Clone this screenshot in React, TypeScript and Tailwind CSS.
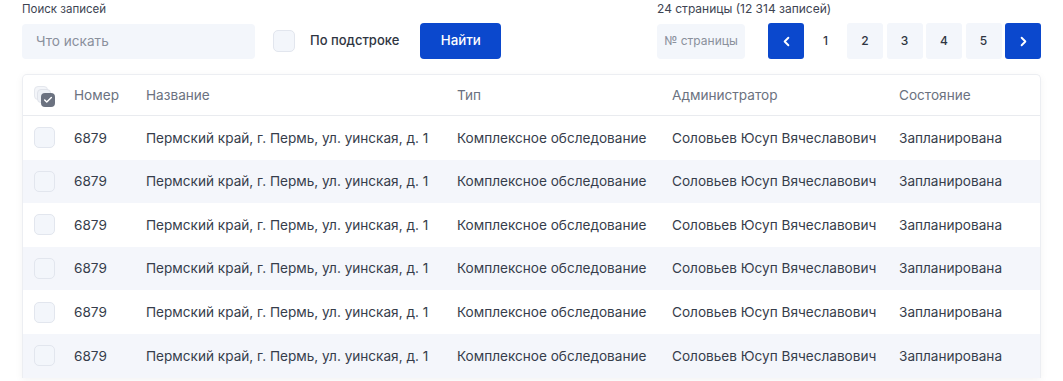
import { ChevronLeft, ChevronRight, Check } from 'lucide-react';

const rows = Array.from({ length: 6 }, () => ({
  id: '6879',
  name: 'Пермский край, г. Пермь, ул. уинская, д. 1',
  type: 'Комплексное обследование',
  admin: 'Соловьев Юсуп Вячеславович',
  status: 'Запланирована',
}));

const cols = 'grid grid-cols-[51px_72px_311px_215px_227px_1fr] items-center';

function Box() {
  return (
    <span className="block h-[21px] w-[21px] rounded-[5px] border border-[#e2e6ee] bg-[#f3f6fb]" />
  );
}

function StackBox() {
  // header "select all": stacked squares with a checked one in front
  return (
    <span className="relative block h-[21px] w-[22px]">
      <span className="absolute left-0 top-0 h-[14px] w-[14px] rounded-[4px] border border-[#e4e7ed] bg-[#f3f5f9]" />
      <span className="absolute left-[3px] top-[3px] h-[14px] w-[14px] rounded-[4px] border border-[#e0e3ea] bg-[#eef1f6]" />
      <span className="absolute left-[7px] top-[7px] flex h-[14px] w-[14px] items-center justify-center rounded-[4px] bg-[#6b7280]">
        <Check className="h-[10px] w-[10px] text-white" strokeWidth={3.5} />
      </span>
    </span>
  );
}

export default function App() {
  return (
    <div className="min-h-[381px] bg-white px-[22px] pt-[2px] font-['Inter','Noto_Sans',sans-serif] text-[#374151]">
      <div className="flex items-end justify-between">
        <div>
          <div className="mb-[7px] text-[11.5px] leading-[14px] text-[#3d4452]">Поиск записей</div>
          <div className="flex items-center">
            <div className="flex h-[35px] w-[233px] items-center rounded-[4px] bg-[#f3f6fb] px-[14px] text-[13.6px] text-[#8a909c]">
              Что искать
            </div>
            <span className="ml-[18px] block h-[22px] w-[22px] rounded-[5px] border border-[#e2e6ee] bg-[#f3f6fb]" />
            <span className="ml-[15px] text-[13px] font-medium text-[#2f3542]">По подстроке</span>
            <button className="ml-[21px] h-[36px] w-[81px] rounded-[4px] bg-[#0b48cd] text-[13.3px] font-medium text-white">
              Найти
            </button>
          </div>
        </div>
        <div>
          <div className="mb-[7px] text-[12px] leading-[14px] text-[#3d4452]">24 страницы (12 314 записей)</div>
          <div className="flex items-center">
            <div className="flex h-[35px] w-[88px] items-center justify-center rounded-[4px] bg-[#f3f6fb] text-[12px] text-[#8a909c]">
              № страницы
            </div>
            <div className="ml-[23px] flex items-center gap-[3.5px]">
              <button className="flex h-[36px] w-[36px] items-center justify-center rounded-[3px] bg-[#0b48cd] text-white">
                <ChevronLeft className="h-[15px] w-[15px]" strokeWidth={3} />
              </button>
              {['1', '2', '3', '4', '5'].map((p) => (
                <button
                  key={p}
                  className={
                    p === '1'
                      ? 'flex h-[36px] w-[36px] items-center justify-center rounded-[3px] text-[12px] font-medium text-[#2f3542]'
                      : 'flex h-[36px] w-[36px] items-center justify-center rounded-[3px] bg-[#f3f6fb] text-[12px] font-medium text-[#2f3542]'
                  }
                >
                  {p}
                </button>
              ))}
              <button className="flex h-[36px] w-[36px] items-center justify-center rounded-[3px] bg-[#0b48cd] text-white">
                <ChevronRight className="h-[15px] w-[15px]" strokeWidth={3} />
              </button>
            </div>
          </div>
        </div>
      </div>

      <div className="mt-[15px] overflow-hidden rounded-t-[5px] border-x border-t border-[#eceef2] shadow-[0_2px_8px_rgba(0,0,0,0.05)]">
        <div className={`${cols} h-[41px] border-b border-[#e9ebef] text-[13.6px] text-[#6b7280]`}>
          <div className="pl-[11px] pt-[2px]">
            <StackBox />
          </div>
          <div>Номер</div>
          <div>Название</div>
          <div>Тип</div>
          <div>Администратор</div>
          <div>Состояние</div>
        </div>
        {rows.map((r, i) => (
          <div
            key={i}
            className={`${cols} h-[43.6px] text-[13.6px] text-[#363d4b] ${i % 2 === 1 ? 'bg-[#f4f6fb]' : 'bg-white'}`}
          >
            <div className="pl-[11px]">
              <Box />
            </div>
            <div>{r.id}</div>
            <div>{r.name}</div>
            <div>{r.type}</div>
            <div>{r.admin}</div>
            <div>{r.status}</div>
          </div>
        ))}
      </div>
    </div>
  );
}
